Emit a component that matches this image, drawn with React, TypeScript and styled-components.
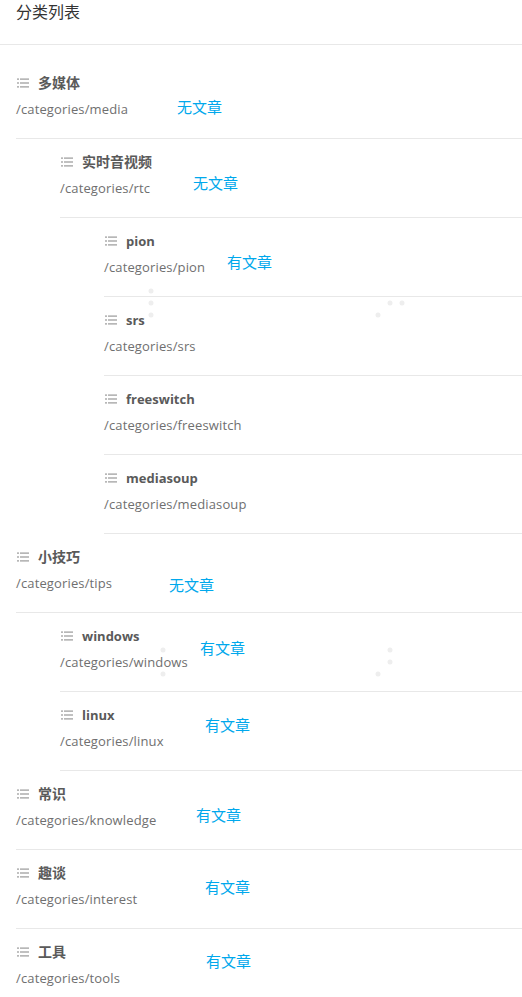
import React from 'react';
import styled, { createGlobalStyle } from 'styled-components';

const GlobalStyle = createGlobalStyle`
  html, body {
    margin: 0;
    padding: 0;
    height: 100%;
    overflow: hidden;
    background: #fff;
  }
  body {
    font-family: "Open Sans", "Noto Sans CJK SC", sans-serif;
    -webkit-font-smoothing: antialiased;
  }
`;

type Category = {
  name: string;
  path: string;
  note: string;
  noteX: number;
  noteY: number;
  children?: Category[];
};

const categories: Category[] = [
  {
    name: '多媒体', path: '/categories/media', note: '无文章', noteX: 161, noteY: 36,
    children: [
      {
        name: '实时音视频', path: '/categories/rtc', note: '无文章', noteX: 133, noteY: 33,
        children: [
          { name: 'pion', path: '/categories/pion', note: '有文章', noteX: 123, noteY: 33 },
          { name: 'srs', path: '/categories/srs', note: '', noteX: 0, noteY: 0 },
          { name: 'freeswitch', path: '/categories/freeswitch', note: '', noteX: 0, noteY: 0 },
          { name: 'mediasoup', path: '/categories/mediasoup', note: '', noteX: 0, noteY: 0 },
        ],
      },
    ],
  },
  {
    name: '小技巧', path: '/categories/tips', note: '无文章', noteX: 153, noteY: 40,
    children: [
      { name: 'windows', path: '/categories/windows', note: '有文章', noteX: 140, noteY: 24 },
      { name: 'linux', path: '/categories/linux', note: '有文章', noteX: 145, noteY: 22 },
    ],
  },
  { name: '常识', path: '/categories/knowledge', note: '有文章', noteX: 180, noteY: 33 },
  { name: '趣谈', path: '/categories/interest', note: '有文章', noteX: 189, noteY: 26 },
  { name: '工具', path: '/categories/tools', note: '有文章', noteX: 190, noteY: 21 },
];

const dots = [
  [151, 291], [151, 303], [151, 315],
  [402, 303], [390, 303], [378, 315],
  [163, 650], [163, 674],
  [390, 650], [390, 662], [378, 674],
];

const Page = styled.div`
  position: relative;
  width: 522px;
  height: 997px;
  overflow: hidden;
  background: #fff;
`;

const Header = styled.header`
  height: 45px;
  padding: 1px 16px 0;
  box-sizing: border-box;
  border-bottom: 1px solid #e8e8e8;
  font-size: 16px;
  line-height: 22px;
  color: #333;
`;

const List = styled.ul`
  list-style: none;
  margin: 0;
  padding: 15px 0 0 16px;
`;

const SubList = styled.ul`
  list-style: none;
  margin: 0 0 0 44px;
  padding: 0;
`;

const Row = styled.div`
  position: relative;
  height: 66px;
  padding-top: 12px;
  border-bottom: 1px solid #e8e8e8;
`;

const TitleLine = styled.div`
  display: flex;
  align-items: center;
  gap: 9px;
  height: 22px;
  padding-left: 1px;
  color: #5a5a5a;
`;

const TitleText = styled.span<{ $cjk: boolean }>`
  font-size: ${(p) => (p.$cjk ? 14 : 13)}px;
  font-weight: 700;
  line-height: 22px;
`;

const PathLine = styled.div`
  margin-top: 4px;
  font-size: 13px;
  letter-spacing: 0.14px;
  line-height: 22px;
  color: #6f6f6f;
`;

const Note = styled.span<{ $x: number; $y: number }>`
  position: absolute;
  left: ${(p) => p.$x}px;
  top: ${(p) => p.$y}px;
  font-size: 15px;
  line-height: 22px;
  color: #00a8ec;
`;

const Dot = styled.i`
  position: absolute;
  width: 5px;
  height: 5px;
  border-radius: 50%;
  background: #eee;
  transform: translate(-50%, -50%);
`;

const ListIcon = () => (
  <svg width="12" height="10" viewBox="0 0 12 10" fill="#999" style={{ flexShrink: 0 }}>
    <rect x="0" y="0.5" width="2" height="1.2" />
    <rect x="3" y="0.5" width="9" height="1.2" />
    <rect x="0" y="4.4" width="2" height="1.2" />
    <rect x="3" y="4.4" width="9" height="1.2" />
    <rect x="0" y="8.3" width="2" height="1.2" />
    <rect x="3" y="8.3" width="9" height="1.2" />
  </svg>
);

function CategoryItem({ item }: { item: Category }) {
  return (
    <li>
      <Row>
        <TitleLine>
          <ListIcon />
          <TitleText $cjk={/[^\x00-\x7f]/.test(item.name)}>{item.name}</TitleText>
        </TitleLine>
        <PathLine>{item.path}</PathLine>
        {item.note && (
          <Note $x={item.noteX} $y={item.noteY}>
            {item.note}
          </Note>
        )}
      </Row>
      {item.children && (
        <SubList>
          {item.children.map((child) => (
            <CategoryItem item={child} key={child.path} />
          ))}
        </SubList>
      )}
    </li>
  );
}

export default function App() {
  return (
    <Page>
      <GlobalStyle />
      <Header>分类列表</Header>
      <List>
        {categories.map((item) => (
          <CategoryItem item={item} key={item.path} />
        ))}
      </List>
      {dots.map(([x, y]) => (
        <Dot key={`${x}-${y}`} style={{ left: x, top: y }} />
      ))}
    </Page>
  );
}
